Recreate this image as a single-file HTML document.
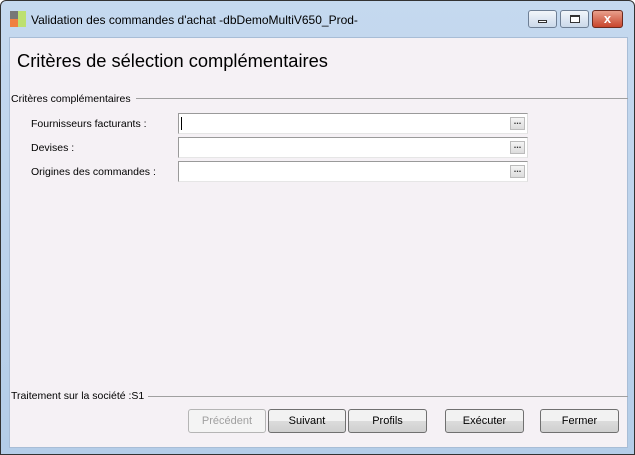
<!DOCTYPE html>
<html><head><style>
*{margin:0;padding:0;box-sizing:border-box}
body{width:635px;height:455px;overflow:hidden;font-family:"Liberation Sans",sans-serif;font-size:10.5px;background:#fff}
.win{position:absolute;left:0;top:0;width:635px;height:455px;background:linear-gradient(#c5d9ef,#b4cde8);border:1px solid #333;border-radius:6px 6px 0 0}
.title{position:absolute;left:30px;top:12px;font-size:12px;color:#000}
.icon{position:absolute;left:9px;top:10px;width:16px;height:16px}
.client{position:absolute;left:8px;top:36px;width:619px;height:411px;background:#f5f1f5;border:1px solid #a8bdd6}
.a{position:absolute}
.tb{position:absolute;top:9px;height:18px;border:1px solid #6e7f95;border-radius:3px;background:linear-gradient(#f2f6fb,#cbd9ea)}
.inp{position:absolute;left:168px;width:350px;height:21px;background:#fff;border:1px solid #9a9a9a;border-right-color:#ddd;border-bottom-color:#e6e6e6}
.dots{position:absolute;right:2px;top:3px;width:15px;height:13px;background:linear-gradient(#f4f4f4,#dcdcdc);border:1px solid #bbb;font-size:9px;line-height:7px;text-align:center;color:#333;font-weight:bold}
.btn{position:absolute;top:371px;height:24px;border:1px solid #707070;border-radius:3px;background:linear-gradient(#f2f2f2 50%,#dcdcdc 50%,#cfcfcf);text-align:center;line-height:22px;font-size:11px}
.line{position:absolute;height:1px;background:#a0a0a0}
</style></head><body>
<div class="win">
<div class="icon"><div class="a" style="left:0;top:0;width:8px;height:8px;background:#777"></div><div class="a" style="left:8px;top:0;width:8px;height:16px;background:#bde070"></div><div class="a" style="left:0;top:8px;width:8px;height:8px;background:#f08040"></div></div>
<div class="title">Validation des commandes d'achat -dbDemoMultiV650_Prod-</div>
<div class="tb" style="left:527px;width:29px"><div class="a" style="left:9px;top:9px;width:9px;height:3px;background:#fff;border:1px solid #333"></div></div>
<div class="tb" style="left:559px;width:29px"><div class="a" style="left:9px;top:4px;width:10px;height:8px;border:1px solid #333;border-top-width:2px;background:#fff"></div></div>
<div class="tb" style="left:591px;width:31px;background:linear-gradient(#e8a08c,#c8452c);border-color:#6b2a1f;color:#fff;font-weight:bold;font-size:13px;text-align:center;line-height:16px">x</div>
<div class="client">
<div class="a" style="left:7px;top:12px;font-size:18.3px;color:#000">Critères de sélection complémentaires</div>
<div class="a" style="left:1px;top:55px">Critères complémentaires</div>
<div class="line" style="left:126px;top:60px;width:492px"></div>
<div class="a" style="left:21px;top:80px">Fournisseurs facturants :</div>
<div class="a" style="left:21px;top:104px">Devises :</div>
<div class="a" style="left:21px;top:128px">Origines des commandes :</div>
<div class="inp" style="top:75px"><div class="a" style="left:2px;top:3px;width:1px;height:13px;background:#000"></div><div class="dots">...</div></div>
<div class="inp" style="top:99px"><div class="dots">...</div></div>
<div class="inp" style="top:123px"><div class="dots">...</div></div>
<div class="a" style="left:1px;top:352px">Traitement sur la société :S1</div>
<div class="line" style="left:138px;top:358px;width:480px"></div>
<div class="btn" style="left:178px;width:78px;border-color:#b5b5b5;background:#f4f4f4;color:#a0a0a0">Précédent</div>
<div class="btn" style="left:258px;width:78px">Suivant</div>
<div class="btn" style="left:338px;width:79px">Profils</div>
<div class="btn" style="left:435px;width:79px">Exécuter</div>
<div class="btn" style="left:530px;width:79px">Fermer</div>
</div>
</div>
</body></html>
